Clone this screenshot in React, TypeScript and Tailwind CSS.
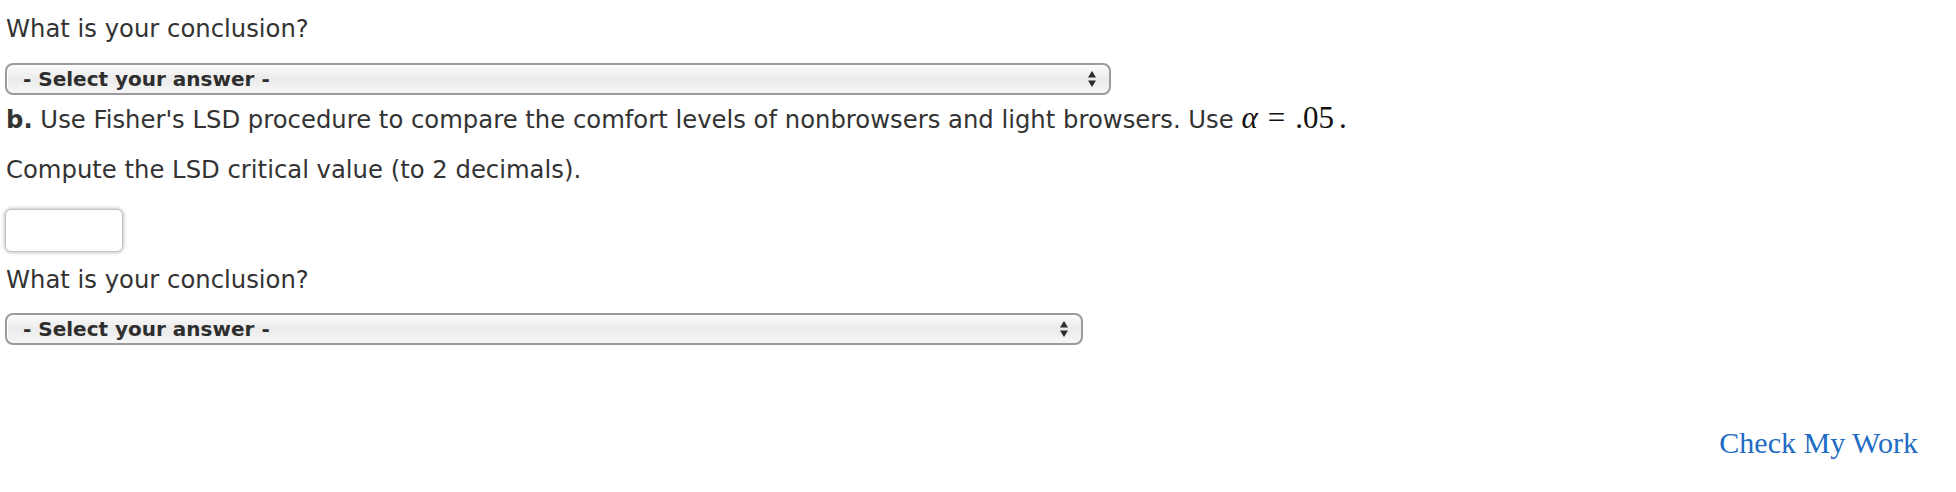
import React from "react";

function Arrows() {
  return (
    <svg width="10" height="18" viewBox="0 0 10 18" className="block">
      <polygon points="1,7.5 5,1 9,7.5" fill="#2b2b2b" />
      <polygon points="1,10.5 5,17 9,10.5" fill="#2b2b2b" />
    </svg>
  );
}

function FakeSelect({ width }: { width: string }) {
  return (
    <div
      className={`${width} h-[32px] rounded-[8px] border-2 border-[#9b9b9b] bg-gradient-to-b from-[#fbfbfb] via-[#ebebeb] to-[#f6f6f6] flex items-center justify-between pl-[16px] pr-[12px] shadow-[inset_1px_1px_0_#ffffff]`}
    >
      <span
        className="text-[20px] font-bold text-[#2e2e2e] leading-none"
        style={{ fontFamily: '"DejaVu Sans", Verdana, sans-serif' }}
      >
        - Select your answer -
      </span>
      <Arrows />
    </div>
  );
}

const serif = { fontFamily: '"Liberation Serif", "Times New Roman", serif' };

export default function App() {
  return (
    <div
      className="w-[1956px] h-[492px] bg-white text-[#333333] pl-[5px] pt-[14px]"
      style={{ fontFamily: '"DejaVu Sans", Verdana, sans-serif' }}
    >
      <p className="text-[24.3px] leading-[30px] pl-[1px]">What is your conclusion?</p>
      <div className="mt-[19px]">
        <FakeSelect width="w-[1106px]" />
      </div>
      <p className="mt-[7px] h-[30px] text-[24.3px] leading-[30px] pl-[1px] whitespace-nowrap">
        <span className="font-bold">b.</span> Use Fisher's LSD procedure to compare the comfort levels of
        nonbrowsers and light browsers. Use{" "}
        <span className="text-[31px] leading-none text-[#111]" style={serif}>
          <span className="italic">α</span>
          <span className="mx-[10px]">=</span>
          <span>.05</span>
        </span>
        <span className="text-[31px] leading-none text-[#111] ml-[5px]" style={serif}>
          .
        </span>
      </p>
      <p className="mt-[23px] text-[24.3px] leading-[30px] pl-[1px]">Compute the LSD critical value (to 2 decimals).</p>
      <div className="mt-[24px] w-[118px] h-[43px] rounded-[6px] border border-[#c4c4c4] bg-white shadow-[0_0_4px_rgba(0,0,0,0.35)]" />
      <p className="mt-[13px] text-[24.3px] leading-[30px] pl-[1px]">What is your conclusion?</p>
      <div className="mt-[18px]">
        <FakeSelect width="w-[1078px]" />
      </div>
      <div className="mt-[80px] flex justify-end pr-[38px]">
        <span
          className="text-[30px] leading-[36px] text-[#1f6cc4]"
          style={{ fontFamily: '"Liberation Serif", Georgia, "Times New Roman", serif' }}
        >
          Check My Work
        </span>
      </div>
    </div>
  );
}
